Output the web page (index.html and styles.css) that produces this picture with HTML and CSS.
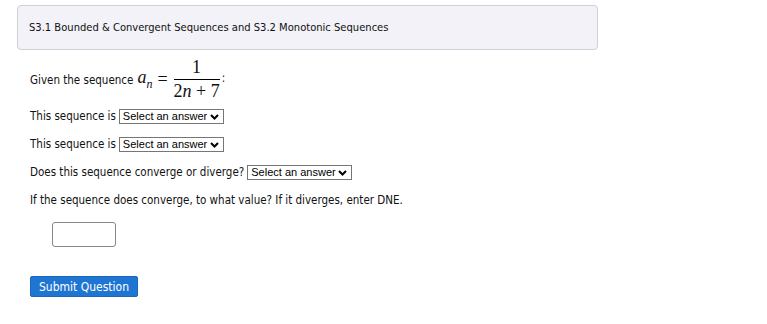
FILE: index.html
```html
<!DOCTYPE html>
<html>
<head>
  <meta charset="utf-8">
  <link rel="stylesheet" href="styles.css">
</head>
<body>
  <div class="headline">S3.1 Bounded &amp; Convergent Sequences and S3.2 Monotonic Sequences</div>

  <div class="question">
    <p class="given">
      Given the sequence
      <span class="math">
        <span class="var">a<sub>n</sub></span>
        <span class="eq">=</span>
        <span class="frac">
          <span class="num">1</span>
          <span class="den">2<i>n</i> + 7</span>
        </span>
      </span><span class="colon">:</span>
    </p>

    <p>This sequence is
      <span class="pick">
        <select class="answer"><option>Select an answer</option></select>
        <svg class="chev" width="9" height="6" viewBox="0 0 9 6"><path d="M1 1 L4.5 4.5 L8 1" fill="none" stroke="#000" stroke-width="2"/></svg>
      </span>
    </p>
    <p>This sequence is
      <span class="pick">
        <select class="answer"><option>Select an answer</option></select>
        <svg class="chev" width="9" height="6" viewBox="0 0 9 6"><path d="M1 1 L4.5 4.5 L8 1" fill="none" stroke="#000" stroke-width="2"/></svg>
      </span>
    </p>
    <p>Does this sequence converge or diverge?
      <span class="pick">
        <select class="answer"><option>Select an answer</option></select>
        <svg class="chev" width="9" height="6" viewBox="0 0 9 6"><path d="M1 1 L4.5 4.5 L8 1" fill="none" stroke="#000" stroke-width="2"/></svg>
      </span>
    </p>
    <p>If the sequence does converge, to what value? If it diverges, enter DNE.</p>

    <div class="entry"><input type="text" class="value"></div>

    <button class="submit">Submit Question</button>
  </div>
</body>
</html>
```

FILE: styles.css
```css
body {
  margin: 0;
  padding: 5px 0 0 17px;
  font-family: "DejaVu Sans Condensed", "DejaVu Sans", sans-serif;
  font-size: 11.5px;
  color: #111;
  background: white;
}

.headline {
  width: 581px;
  height: 45px;
  box-sizing: border-box;
  padding: 15px 11px 0;
  background: #f2f2f8;
  border: 1px solid #cfcfd6;
  border-radius: 4px;
  font-size: 11.1px;
}

.question {
  padding: 7px 0 0 13px;
}

.question p {
  margin: 0;
  height: 28px;
  display: flex;
  align-items: center;
  gap: 3px;
}

.question p.given {
  height: 45px;
}

.math {
  display: inline-flex;
  align-items: center;
  font-family: "Liberation Serif", serif;
  font-size: 18px;
  margin-left: 1px;
}

.var {
  font-style: italic;
}

.var sub {
  font-size: 12px;
}

.eq {
  margin: 0 5px;
}

.frac {
  display: inline-flex;
  flex-direction: column;
  align-items: center;
  padding: 0 1px;
}

.num {
  border-bottom: 1px solid #000;
  padding: 0 4px 1px;
  align-self: stretch;
  text-align: center;
}

.den {
  padding-top: 1px;
}

.colon {
  margin-left: -2px;
  margin-top: -4px;
}

.pick {
  position: relative;
  display: inline-flex;
}

.answer {
  appearance: none;
  font-family: "Liberation Sans", sans-serif;
  font-size: 11px;
  width: 105px;
  height: 15px;
  padding: 0 0 0 3px;
  border: 1px solid #767676;
  border-radius: 0;
  background: white;
  color: #000;
  line-height: 13px;
}

.chev {
  position: absolute;
  right: 5px;
  top: 5px;
  pointer-events: none;
}

.entry {
  padding: 8px 0 0 22px;
}

.value {
  width: 64px;
  height: 25px;
  box-sizing: border-box;
  border: 1px solid #888;
  border-radius: 3px;
}

.submit {
  margin-top: 29px;
  background: #1f76d2;
  color: white;
  border: 1px solid #1a68bd;
  border-radius: 2px;
  font-family: "DejaVu Sans Condensed", "DejaVu Sans", sans-serif;
  font-size: 12px;
  height: 21px;
  padding: 0 8px;
}
```
